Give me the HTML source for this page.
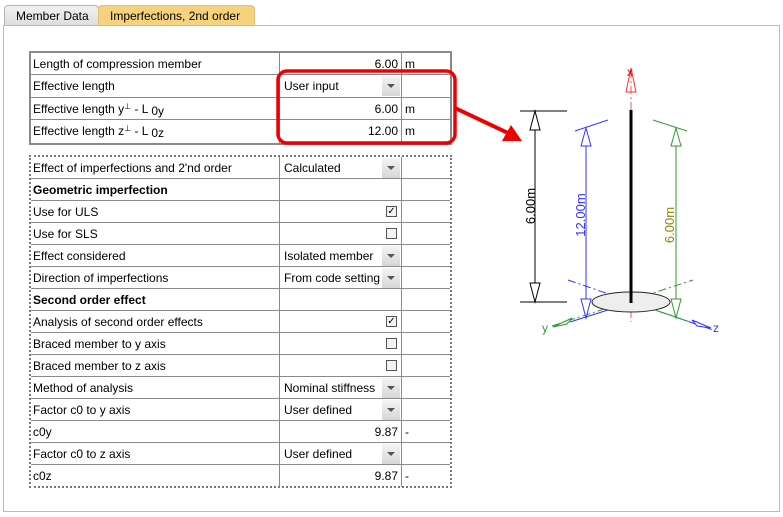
<!DOCTYPE html>
<html><head><meta charset="utf-8"><style>
*{box-sizing:border-box;margin:0;padding:0}
body{width:783px;height:517px;background:#fff;font-family:"Liberation Sans",sans-serif;font-size:12px;color:#000;position:relative;overflow:hidden}
.abs{position:absolute}
.tab{position:absolute;top:5px;height:21px;border:1px solid #b5b5b5;border-bottom:none;border-radius:4px 4px 0 0;padding:3px 0 0 11px;font-size:12px}
.panel{position:absolute;left:3px;top:25px;width:777px;height:487px;border:1px solid #b9bcc4;background:#fff}
.t{position:absolute;background:#fff}
.r{position:absolute;left:0;right:0;border-bottom:1px solid #8a8a8a;height:22px}
.c{position:absolute;top:0;bottom:0;line-height:23px;white-space:nowrap;overflow:hidden}
.c1{left:0;width:249px;border-right:1px solid #8a8a8a;padding-left:2px}
.c2{left:249px;width:122px;border-right:1px solid #8a8a8a;text-align:right;padding-right:3px}
.c3{left:371px;padding-left:3px}
.dd{position:absolute;left:1px;top:1px;width:119px;height:20px;background:#fff;text-align:left;padding-left:3px;line-height:21px}
.dd:after{content:"";position:absolute;right:0;top:0;width:18px;height:20px;background:linear-gradient(#f4f4f4,#d6d6d6)}
.dd:before{content:"";position:absolute;right:5px;top:8px;border-left:4px solid transparent;border-right:4px solid transparent;border-top:4px solid #555;z-index:1}
.cb{position:absolute;right:4px;top:5px;width:11px;height:11px;border:1px solid #555;background:#f3f3f3;font-size:10px;line-height:9px;text-align:center}
b{font-weight:bold}
.sp{font-size:8px;position:relative;top:-4px}
.sb{position:relative;top:2px}
</style></head><body>
<div class="tab" style="left:4px;width:95px;background:linear-gradient(#f2f2f2,#dcdcdc)">Member Data</div>
<div class="tab" style="left:98px;width:157px;background:#f7d27e;border-color:#e0c27a">Imperfections, 2nd order</div>
<div class="panel"></div>

<div class="t" style="left:29px;top:51px;width:423px;height:94px;border:2px solid #8a8a8a">
<div class="r" style="top:0"><div class="c c1">Length of compression member</div><div class="c c2">6.00</div><div class="c c3">m</div></div>
<div class="r" style="top:22px;height:23px"><div class="c c1">Effective length</div><div class="c c2"><div class="dd">User input</div></div><div class="c c3"></div></div>
<div class="r" style="top:45px"><div class="c c1">Effective length y<span class="sp">⊥</span> - L <span class="sb">0y</span></div><div class="c c2">6.00</div><div class="c c3">m</div></div>
<div class="r" style="top:67px;height:23px;border-bottom:none"><div class="c c1">Effective length z<span class="sp">⊥</span> - L <span class="sb">0z</span></div><div class="c c2">12.00</div><div class="c c3">m</div></div>
</div>

<div class="t" style="left:29px;top:155px;width:423px;height:333px;border:2px dotted #777">
<div class="r" style="top:0"><div class="c c1">Effect of imperfections and 2'nd order</div><div class="c c2"><div class="dd">Calculated</div></div><div class="c c3"></div></div>
<div class="r" style="top:22px"><div class="c c1"><b>Geometric imperfection</b></div><div class="c c2"></div></div>
<div class="r" style="top:44px"><div class="c c1">Use for ULS</div><div class="c c2"><div class="cb">✓</div></div></div>
<div class="r" style="top:66px"><div class="c c1">Use for SLS</div><div class="c c2"><div class="cb"></div></div></div>
<div class="r" style="top:88px"><div class="c c1">Effect considered</div><div class="c c2"><div class="dd">Isolated member</div></div></div>
<div class="r" style="top:110px"><div class="c c1">Direction of imperfections</div><div class="c c2"><div class="dd">From code setting</div></div></div>
<div class="r" style="top:132px"><div class="c c1"><b>Second order effect</b></div><div class="c c2"></div></div>
<div class="r" style="top:154px"><div class="c c1">Analysis of second order effects</div><div class="c c2"><div class="cb">✓</div></div></div>
<div class="r" style="top:176px"><div class="c c1">Braced member to y axis</div><div class="c c2"><div class="cb"></div></div></div>
<div class="r" style="top:198px"><div class="c c1">Braced member to z axis</div><div class="c c2"><div class="cb"></div></div></div>
<div class="r" style="top:220px"><div class="c c1">Method of analysis</div><div class="c c2"><div class="dd">Nominal stiffness</div></div></div>
<div class="r" style="top:242px"><div class="c c1">Factor c0 to y axis</div><div class="c c2"><div class="dd">User defined</div></div></div>
<div class="r" style="top:264px"><div class="c c1">c0y</div><div class="c c2">9.87</div><div class="c c3">-</div></div>
<div class="r" style="top:286px"><div class="c c1">Factor c0 to z axis</div><div class="c c2"><div class="dd">User defined</div></div></div>
<div class="r" style="top:308px;border-bottom:none"><div class="c c1">c0z</div><div class="c c2">9.87</div><div class="c c3">-</div></div>
</div>

<svg class="abs" style="left:0;top:0" width="783" height="517" font-family="Liberation Sans, sans-serif">
<rect x="278" y="71" width="177" height="72" rx="9" fill="none" stroke="#e00" stroke-width="3.5"/>
<line x1="455" y1="108" x2="508" y2="133" stroke="#e00" stroke-width="4"/>
<polygon points="522,141 502,141 511,125" fill="#e00"/>
<line x1="631" y1="70" x2="631" y2="322" stroke="#f55" stroke-dasharray="8,3,2,3"/>
<polygon points="631,68 626,92 636,92" fill="none" stroke="#f33"/>
<text x="627" y="76" fill="#e00" font-size="12">x</text>
<line x1="568" y1="280" x2="713" y2="330" stroke="#33f" stroke-dasharray="8,3,2,3"/>
<line x1="552" y1="326" x2="693" y2="280" stroke="#393" stroke-dasharray="8,3,2,3"/>
<ellipse cx="631" cy="302" rx="39" ry="10" fill="#eee" stroke="#222"/>
<line x1="631" y1="110" x2="631" y2="303" stroke="#000" stroke-width="3"/>
<line x1="520" y1="111" x2="567" y2="111" stroke="#000"/>
<line x1="520" y1="302" x2="567" y2="302" stroke="#000"/>
<line x1="535" y1="111" x2="535" y2="302" stroke="#000"/>
<polygon points="535,111 530,130 540,130" fill="#fff" stroke="#000"/>
<polygon points="535,302 530,283 540,283" fill="#fff" stroke="#000"/>
<text transform="translate(535,206) rotate(-90)" text-anchor="middle" font-size="13" fill="#000">6.00m</text>
<line x1="575" y1="131" x2="608" y2="120" stroke="#33f"/>
<line x1="586" y1="128" x2="586" y2="318" stroke="#33f"/>
<polygon points="586,128 581,146 591,146" fill="#fff" stroke="#33f"/>
<polygon points="586,318 581,299 591,299" fill="#fff" stroke="#33f"/>
<line x1="570" y1="322" x2="608" y2="310" stroke="#33f"/>
<text transform="translate(585,215) rotate(-90)" text-anchor="middle" font-size="13" fill="#33f">12.00m</text>
<line x1="653" y1="120" x2="687" y2="131" stroke="#393"/>
<line x1="676" y1="128" x2="676" y2="318" stroke="#393"/>
<polygon points="676,128 671,146 681,146" fill="#fff" stroke="#393"/>
<polygon points="676,318 671,299 681,299" fill="#fff" stroke="#393"/>
<line x1="655" y1="310" x2="690" y2="322" stroke="#393"/>
<text transform="translate(674,225) rotate(-90)" text-anchor="middle" font-size="13" fill="#8a8a00">6.00m</text>
<polygon points="553,327 572,318 567,324" fill="#fff" stroke="#393"/>
<text x="542" y="332" fill="#393" font-size="12">y</text>
<polygon points="711,328 692,320 697,326" fill="#fff" stroke="#33f"/>
<text x="713" y="332" fill="#33f" font-size="12">z</text>
</svg>
</body></html>
